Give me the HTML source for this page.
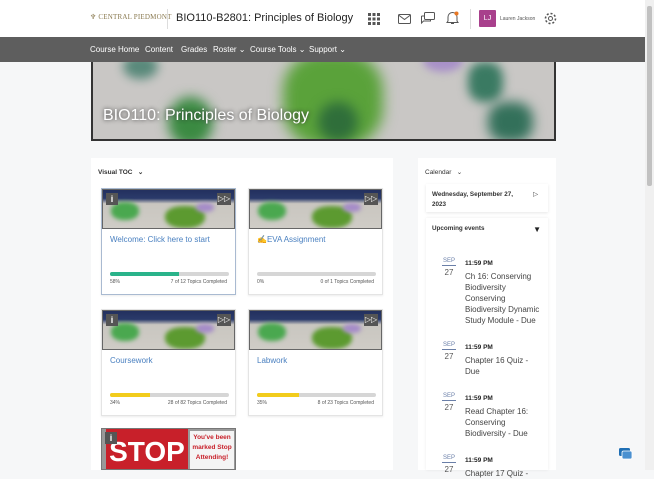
<!DOCTYPE html>
<html><head><meta charset="utf-8"><style>
*{box-sizing:border-box;margin:0;padding:0}
body{width:654px;height:470px;overflow:hidden;background:#f6f7f8;font-family:"Liberation Sans",sans-serif;position:relative;color:#202122}
.hdr{position:absolute;left:0;top:0;width:645px;height:37px;background:#fff}
.nav{position:absolute;left:0;top:37px;width:645px;height:25px;background:#5e5e5e;color:#fff;font-size:8px}
.nav span{position:absolute;top:8px}
.sb{position:absolute;left:645px;top:0;width:9px;height:470px;background:#f0f0f0}
.sb div{position:absolute;left:2px;top:6px;width:5px;height:180px;background:#c1c1c1;border-radius:2px}
.banner{position:absolute;left:91px;top:62px;width:465px;height:79px;border:2px solid #333;border-top:none;overflow:hidden;background:#c9c7c5}
.banner .t{position:absolute;left:10px;top:45px;color:#fff;font-size:16px;text-shadow:0 0 4px #333}
.left{position:absolute;left:91px;top:158px;width:302px;height:312px;background:#fff}
.right{position:absolute;left:418px;top:158px;width:138px;height:312px;background:#fff}
.card{position:absolute;width:135px;height:107px;background:#fff;border:1px solid #e4e4e4;box-shadow:0 1px 2px rgba(0,0,0,.08)}
.card.sel{border:1px solid #a9bad1}
.img{height:40px;position:relative;overflow:hidden;border:1px solid #666;
background:linear-gradient(180deg,#23305e 0%,#2a3a6a 22%,#c9c6c0 36%,#cfccc6 100%)}
.img i{position:absolute;border-radius:45%;filter:blur(2px)}
.ib{position:absolute;left:3px;top:3px;width:12px;height:12px;background:#555;color:#fff;font-size:9px;font-weight:bold;text-align:center;line-height:12px}
.nb{position:absolute;right:3px;top:3px;width:14px;height:12px;background:#555;color:#fff;font-size:8px;text-align:center;line-height:12px}
.ct{position:absolute;left:8px;top:46px;font-size:8px;color:#4a80c0}
.bar{position:absolute;left:8px;top:83px;width:119px;height:4px;background:#d6d6d6;border-radius:2px;overflow:hidden}
.bar b{display:block;height:4px}
.pl{position:absolute;left:8px;top:90px;font-size:5px;color:#555}
.pr{position:absolute;right:8px;top:90px;font-size:5px;color:#555}
.ev{position:absolute;left:465px;font-size:8px;color:#444;line-height:11px;width:80px}
.ev b{font-size:6.5px;color:#222;display:block;margin-bottom:2px}
.dt{position:absolute;left:442px;width:14px;text-align:center;color:#6a7fa8}
.dt .m{font-size:6px;border-bottom:1px solid #6a7fa8;padding-bottom:1px}
.dt .d{font-size:8px;margin-top:2px;color:#555}
</style></head><body>
<div class="hdr">
 <div style="position:absolute;left:90px;top:13px;font-size:7px;color:#8a7a50;font-family:'Liberation Serif',serif;letter-spacing:.2px">♆ CENTRAL PIEDMONT</div>
 <div style="position:absolute;left:167px;top:9px;width:1px;height:20px;background:#ddd"></div>
 <div style="position:absolute;left:176px;top:12px;font-size:11px;color:#222">BIO110-B2801: Principles of Biology</div>
 <svg style="position:absolute;left:368px;top:13px" width="12" height="12"><g fill="#555"><rect x="0" y="0" width="3" height="3"/><rect x="4.5" y="0" width="3" height="3"/><rect x="9" y="0" width="3" height="3"/><rect x="0" y="4.5" width="3" height="3"/><rect x="4.5" y="4.5" width="3" height="3"/><rect x="9" y="4.5" width="3" height="3"/><rect x="0" y="9" width="3" height="3"/><rect x="4.5" y="9" width="3" height="3"/><rect x="9" y="9" width="3" height="3"/></g></svg>
 <svg style="position:absolute;left:398px;top:14px" width="13" height="10"><rect x=".5" y=".5" width="12" height="9" rx="1" fill="none" stroke="#555"/><path d="M.5 1l6 4.5 6-4.5" fill="none" stroke="#555"/></svg>
 <svg style="position:absolute;left:421px;top:12px" width="14" height="13"><rect x="3.5" y=".5" width="10" height="7" rx="1" fill="none" stroke="#555"/><path d="M.5 4h3M.5 4v7l2-2h7v-1.5" fill="none" stroke="#555"/></svg>
 <svg style="position:absolute;left:446px;top:11px" width="13" height="14"><path d="M2 10V6a4.5 4.5 0 0 1 9 0v4l1 1.5H1z M5 12.5h3" fill="none" stroke="#555"/><circle cx="10.5" cy="2.5" r="2" fill="#e87722"/></svg>
 <div style="position:absolute;left:470px;top:9px;width:1px;height:20px;background:#ddd"></div>
 <div style="position:absolute;left:479px;top:10px;width:17px;height:17px;background:#a8408c;color:#fff;font-size:7px;text-align:center;line-height:17px;border-radius:1px">LJ</div>
 <div style="position:absolute;left:500px;top:16px;font-size:5px;color:#555">Lauren Jackson</div>
 <svg style="position:absolute;left:544px;top:12px" width="13" height="13" viewBox="0 0 13 13"><circle cx="6.5" cy="6.5" r="2" fill="none" stroke="#555"/><circle cx="6.5" cy="6.5" r="5" fill="none" stroke="#555" stroke-width="1.6" stroke-dasharray="2 1.9"/></svg>
</div>
<div class="nav"><span style="left:90px">Course Home</span><span style="left:145px">Content</span><span style="left:181px">Grades</span><span style="left:213px">Roster ⌄</span><span style="left:250px">Course Tools ⌄</span><span style="left:309px">Support ⌄</span></div>
<div class="banner">
 <div style="position:absolute;left:30px;top:-8px;width:35px;height:25px;background:#3d7a68;border-radius:50%;filter:blur(5px);opacity:.8"></div>
 <div style="position:absolute;left:75px;top:35px;width:45px;height:50px;background:#3b8a42;border-radius:50%;filter:blur(6px)"></div>
 <div style="position:absolute;left:190px;top:-10px;width:100px;height:95px;background:#5aa23a;border-radius:40%;filter:blur(7px)"></div>
 <div style="position:absolute;left:225px;top:40px;width:40px;height:40px;background:#2f6e3a;border-radius:50%;filter:blur(6px)"></div>
 <div style="position:absolute;left:330px;top:-12px;width:40px;height:22px;background:#a890c8;border-radius:50%;filter:blur(4px)"></div>
 <div style="position:absolute;left:375px;top:0px;width:35px;height:40px;background:#3a7a62;border-radius:40%;filter:blur(5px)"></div>
 <div style="position:absolute;left:395px;top:40px;width:45px;height:40px;background:#33705a;border-radius:40%;filter:blur(6px)"></div>
 <div class="t">BIO110: Principles of Biology</div>
</div>
<div class="sb"><div></div></div>
<div class="left">
 <div style="position:absolute;left:7px;top:10px;font-size:6.5px;font-weight:bold;color:#333">Visual TOC &nbsp; ⌄</div>
</div>
<div class="right">
 <div style="position:absolute;left:7px;top:10px;font-size:6.5px;color:#333">Calendar &nbsp; ⌄</div>
 <div style="position:absolute;left:8px;top:26px;width:122px;height:28px;box-shadow:0 1px 3px rgba(0,0,0,.1);font-size:6.3px;font-weight:bold;color:#333;padding:6px 6px;line-height:10px">Wednesday, September 27,<br>2023<span style="position:absolute;right:10px;top:6px;font-weight:normal">▷</span></div>
 <div style="position:absolute;left:8px;top:60px;width:122px;height:252px;box-shadow:0 0 3px rgba(0,0,0,.08)"><div style="position:absolute;left:6px;top:7px;font-size:6.3px;font-weight:bold;color:#333">Upcoming events</div><div style="position:absolute;right:7px;top:7px;font-size:8px">▼</div></div>
</div>
<!-- cards -->
<div class="card sel" style="left:101px;top:188px"><div class="img"><i style="left:8px;top:12px;width:28px;height:18px;background:#4aa84f"></i><i style="left:62px;top:16px;width:40px;height:22px;background:#5c9a30"></i><i style="left:93px;top:13px;width:18px;height:9px;background:#a58bc8"></i><div class="ib">i</div><div class="nb">▷▷</div></div><div class="ct">Welcome: Click here to start</div><div class="bar"><b style="width:58%;background:#2ab38a"></b></div><div class="pl">58%</div><div class="pr">7 of 12 Topics Completed</div></div>
<div class="card" style="left:248px;top:188px"><div class="img"><i style="left:8px;top:12px;width:28px;height:18px;background:#4aa84f"></i><i style="left:62px;top:16px;width:40px;height:22px;background:#5c9a30"></i><i style="left:93px;top:13px;width:18px;height:9px;background:#a58bc8"></i><div class="nb">▷▷</div></div><div class="ct"><span style="color:#e08a20">✍</span>EVA Assignment</div><div class="bar"></div><div class="pl">0%</div><div class="pr">0 of 1 Topics Completed</div></div>
<div class="card" style="left:101px;top:309px"><div class="img"><i style="left:8px;top:12px;width:28px;height:18px;background:#4aa84f"></i><i style="left:62px;top:16px;width:40px;height:22px;background:#5c9a30"></i><i style="left:93px;top:13px;width:18px;height:9px;background:#a58bc8"></i><div class="ib">i</div><div class="nb">▷▷</div></div><div class="ct">Coursework</div><div class="bar"><b style="width:34%;background:#f2cc1c"></b></div><div class="pl">34%</div><div class="pr">28 of 82 Topics Completed</div></div>
<div class="card" style="left:248px;top:309px"><div class="img"><i style="left:8px;top:12px;width:28px;height:18px;background:#4aa84f"></i><i style="left:62px;top:16px;width:40px;height:22px;background:#5c9a30"></i><i style="left:93px;top:13px;width:18px;height:9px;background:#a58bc8"></i><div class="nb">▷▷</div></div><div class="ct">Labwork</div><div class="bar"><b style="width:35%;background:#f2cc1c"></b></div><div class="pl">35%</div><div class="pr">8 of 23 Topics Completed</div></div>
<div style="position:absolute;left:101px;top:428px;width:135px;height:42px;background:#999;border:1px solid #777;overflow:hidden">
 <div style="position:absolute;left:4px;top:0;width:82px;height:42px;background:#c8202a;color:#fff;font-size:28px;font-weight:bold;line-height:46px;text-align:center;overflow:hidden;white-space:nowrap">STOP</div>
 <div style="position:absolute;left:88px;top:2px;width:44px;height:40px;background:#f4f4f4;color:#c8202a;font-size:6.5px;font-weight:bold;text-align:center;line-height:10px;padding-top:2px">You've been marked Stop Attending!</div>
 <div class="ib">i</div>
</div>
<!-- events -->
<div class="dt" style="top:258px"><div class="m">SEP</div><div class="d">27</div></div>
<div class="ev" style="top:258px"><b>11:59 PM</b>Ch 16: Conserving Biodiversity Conserving Biodiversity Dynamic Study Module - Due</div>
<div class="dt" style="top:342px"><div class="m">SEP</div><div class="d">27</div></div>
<div class="ev" style="top:342px"><b>11:59 PM</b>Chapter 16 Quiz - Due</div>
<div class="dt" style="top:393px"><div class="m">SEP</div><div class="d">27</div></div>
<div class="ev" style="top:393px"><b>11:59 PM</b>Read Chapter 16: Conserving Biodiversity - Due</div>
<div class="dt" style="top:455px"><div class="m">SEP</div><div class="d">27</div></div>
<div class="ev" style="top:455px"><b>11:59 PM</b>Chapter 17 Quiz -</div>
<svg style="position:absolute;left:619px;top:448px" width="14" height="12"><rect x="0" y="0" width="11" height="8" rx="1.5" fill="#1f6fb5"/><rect x="3" y="3" width="10" height="8" rx="1.5" fill="#4a90d0" stroke="#fff" stroke-width=".8"/></svg>
</body></html>
